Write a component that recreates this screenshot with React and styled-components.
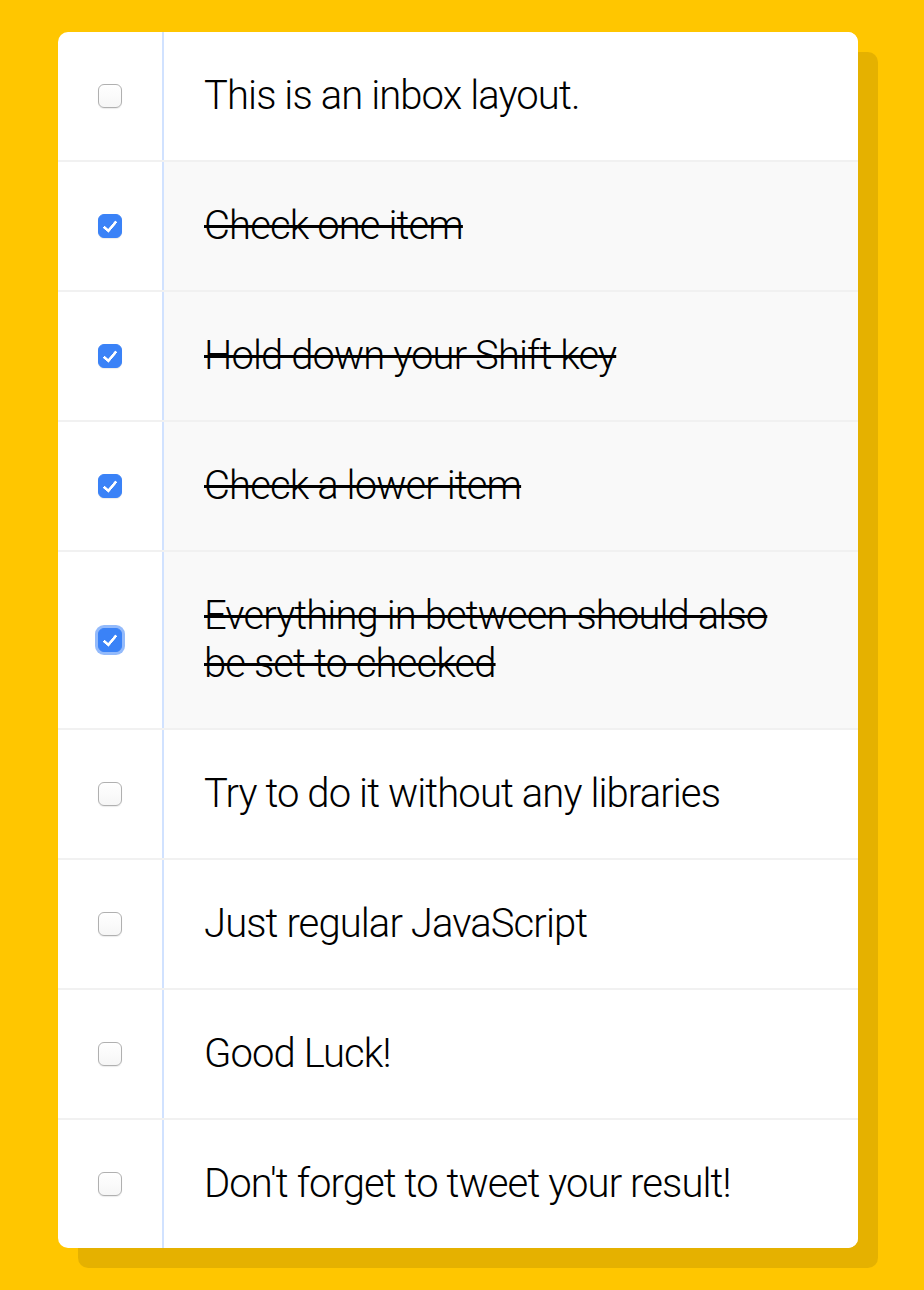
import React, { useState, useRef } from 'react';
import styled, { createGlobalStyle } from 'styled-components';

const GlobalStyle = createGlobalStyle`
  html, body {
    margin: 0;
    padding: 0;
    background: #ffc600;
  }
  body {
    font-family: "Liberation Sans", Arial, sans-serif;
  }
`;

const ITEMS = [
  { text: 'This is an inbox layout.', done: false },
  { text: 'Check one item', done: true },
  { text: 'Hold down your Shift key', done: true },
  { text: 'Check a lower item', done: true },
  { text: 'Everything in between should also be set to checked', done: true },
  { text: 'Try to do it without any libraries', done: false },
  { text: 'Just regular JavaScript', done: false },
  { text: 'Good Luck!', done: false },
  { text: "Don't forget to tweet your result!", done: false },
];

export default function App() {
  const [checked, setChecked] = useState(ITEMS.map(i => i.done));
  const [focused, setFocused] = useState(4);
  const lastChecked = useRef(null);

  const handleClick = (index, e) => {
    const next = [...checked];
    const value = !next[index];
    next[index] = value;
    // shift-click fills in everything between the last box and this one
    if (e.shiftKey && value && lastChecked.current !== null) {
      const from = Math.min(lastChecked.current, index);
      const to = Math.max(lastChecked.current, index);
      for (let i = from; i <= to; i++) next[i] = true;
    }
    lastChecked.current = index;
    setChecked(next);
    setFocused(index);
  };

  return (
    <Page>
      <GlobalStyle />
      <Inbox>
        {ITEMS.map((item, i) => (
          <Item key={i}>
            <BoxCell>
              <CheckBox
                type="checkbox"
                checked={checked[i]}
                $focused={focused === i}
                onChange={() => {}}
                onClick={e => handleClick(i, e)}
              />
            </BoxCell>
            <Label $done={checked[i]}>{item.text}</Label>
          </Item>
        ))}
      </Inbox>
    </Page>
  );
}

const Page = styled.div`
  padding: 32px 66px 42px 58px;
`;

const Inbox = styled.div`
  width: 800px;
  background: white;
  border-radius: 10px;
  box-shadow: 20px 20px 0 rgba(0, 0, 0, 0.1);
  overflow: hidden;
`;

const Item = styled.div`
  display: flex;
  align-items: stretch;
  border-bottom: 2px solid #f1f1f1;

  &:last-child {
    border-bottom: 0;
  }
`;

const BoxCell = styled.div`
  display: flex;
  align-items: center;
  padding: 0 40px;
`;

const CheckBox = styled.input`
  appearance: none;
  position: relative;
  width: 24px;
  height: 24px;
  margin: 0;
  border-radius: 6px;
  border: 1.5px solid #b0b0b0;
  background: linear-gradient(#ffffff, #f6f6f6);
  box-shadow: 0 1px 1px rgba(0, 0, 0, 0.08);
  cursor: pointer;
  outline: none;

  &:checked {
    border-color: #3a82f7;
    background: #3a82f7;
  }

  &:checked::after {
    content: '';
    position: absolute;
    left: 7px;
    top: 3px;
    width: 5px;
    height: 11px;
    border: solid white;
    border-width: 0 3px 3px 0;
    border-radius: 1px;
    transform: rotate(40deg);
  }

  ${p => p.$focused && `
    box-shadow: 0 0 0 3px rgba(58, 130, 247, 0.55);
  `}
`;

const Label = styled.p`
  flex: 1;
  margin: 0;
  padding: 40px 48px 40px 40px;
  border-left: 2px solid #d1e2ff;
  font-family: Roboto, "Liberation Sans", sans-serif;
  font-weight: 300;
  font-size: 40px;
  line-height: 48px;
  letter-spacing: -0.9px;
  color: #000;
  background: ${p => (p.$done ? '#f9f9f9' : 'white')};
  text-decoration: ${p => (p.$done ? 'line-through' : 'none')};
  text-decoration-thickness: 3px;
`;
